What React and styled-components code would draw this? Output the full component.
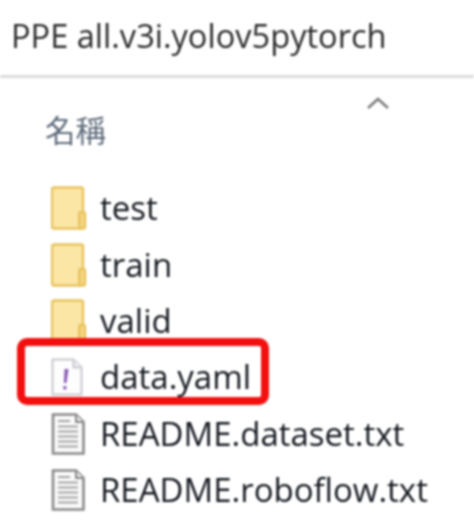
import React from "react";
import styled, { createGlobalStyle } from "styled-components";

const files = [
  { name: "test", kind: "folder" },
  { name: "train", kind: "folder" },
  { name: "valid", kind: "folder" },
  { name: "data.yaml", kind: "yaml", marked: true },
  { name: "README.dataset.txt", kind: "text" },
  { name: "README.roboflow.txt", kind: "text" },
];

const FolderIcon = () => (
  <svg width="36" height="44" viewBox="0 0 36 44">
    <path d="M3 1.500h27a2 2 0 0 1 2 2V26h-1.500a2 2 0 0 0-2 2v14.500H3a2 2 0 0 1-2-2V3.500a2 2 0 0 1 2-2z" fill="#fbe6a6" stroke="#e8c35f" strokeWidth="2.400" />
    <path d="M28.500 42.500V28a2 2 0 0 1 2-2H32a2 2 0 0 1 2 2v12.500a2 2 0 0 1-2 2z" fill="#f6d987" stroke="#e8c35f" strokeWidth="2.400" />
  </svg>
);

const YamlIcon = () => (
  <svg width="32" height="38" viewBox="0 0 32 38">
    <path d="M1.500 1.500h21l8 8v27h-29z" fill="#fdfdfe" stroke="#c9c9cf" strokeWidth="2" />
    <path d="M22.500 1.500v8h8" fill="#f0f0f2" stroke="#c9c9cf" strokeWidth="2" />
    <path d="M17.500 11l-2 14h-2.600l.6-14zM12.400 28h3v3.400h-3z" fill="#8a5fb5" />
  </svg>
);

const TextIcon = () => (
  <svg width="34" height="42" viewBox="0 0 34 42">
    <path d="M2 1.500h23l7.500 7.500v31.500H2z" fill="#fafafa" stroke="#8a8a8a" strokeWidth="2.600" />
    <path d="M25 1.500V9h7.500" fill="#e4e4e4" stroke="#8a8a8a" strokeWidth="2" />
    <path d="M7 8h12M7 13.500h20M7 18.500h20M7 23.500h20M7 28.500h20M7 33.500h20" stroke="#a3a3a3" strokeWidth="2" />
  </svg>
);

const icons = { folder: FolderIcon, yaml: YamlIcon, text: TextIcon };

export default function App() {
  return (
    <>
      <GlobalStyle />
      <Window>
        <TitleBar>PPE all.v3i.yolov5pytorch</TitleBar>
        <ColumnHeader>
          <ColumnName>名稱</ColumnName>
          <SortCaret width="24" height="14" viewBox="0 0 24 14">
            <path d="M2 12L12 3l10 9" fill="none" stroke="#7c7c7c" strokeWidth="2.600" />
          </SortCaret>
        </ColumnHeader>
        <FileList>
          {files.map((file) => {
            const Icon = icons[file.kind];
            return (
              <FileRow key={file.name}>
                <IconSlot>
                  <Icon />
                </IconSlot>
                <FileName>{file.name}</FileName>
                {file.marked && <Highlight />}
              </FileRow>
            );
          })}
        </FileList>
      </Window>
    </>
  );
}

const GlobalStyle = createGlobalStyle`
  html, body {
    margin: 0;
    background: #fff;
  }
`;

const Window = styled.div`
  width: 474px;
  height: 522px;
  overflow: hidden;
  background: #fff;
  color: #2a2a2a;
  font-family: "Open Sans", "Noto Sans CJK TC", sans-serif;
  filter: blur(0.8px);
`;

const TitleBar = styled.div`
  height: 78px;
  box-sizing: border-box;
  padding: 14px 0 0 11px;
  border-bottom: 3px solid #dcdcdc;
  font-size: 32.600px;
  line-height: 44px;
  white-space: nowrap;
`;

const ColumnHeader = styled.div`
  position: relative;
  height: 102px;
  box-sizing: border-box;
  padding: 29px 0 0 45px;
`;

const ColumnName = styled.span`
  font-family: "Noto Sans CJK TC", sans-serif;
  font-size: 30.500px;
  line-height: 44px;
  color: #5f6c7c;
`;

const SortCaret = styled.svg`
  position: absolute;
  left: 366px;
  top: 18px;
`;

const FileList = styled.div`
  display: flex;
  flex-direction: column;
`;

const FileRow = styled.div`
  position: relative;
  height: 56.400px;
  display: flex;
  align-items: center;
  padding-left: 51px;
`;

const IconSlot = styled.div`
  width: 49px;
  display: flex;
  align-items: center;

  svg {
    display: block;
  }
`;

const FileName = styled.span`
  font-size: 33px;
  line-height: 44px;
  color: #14181f;
  white-space: nowrap;
`;

const Highlight = styled.div`
  position: absolute;
  left: 17px;
  top: -11px;
  width: 252px;
  height: 67px;
  box-sizing: border-box;
  border: 8px solid #f40f0f;
  border-radius: 10px;
`;
